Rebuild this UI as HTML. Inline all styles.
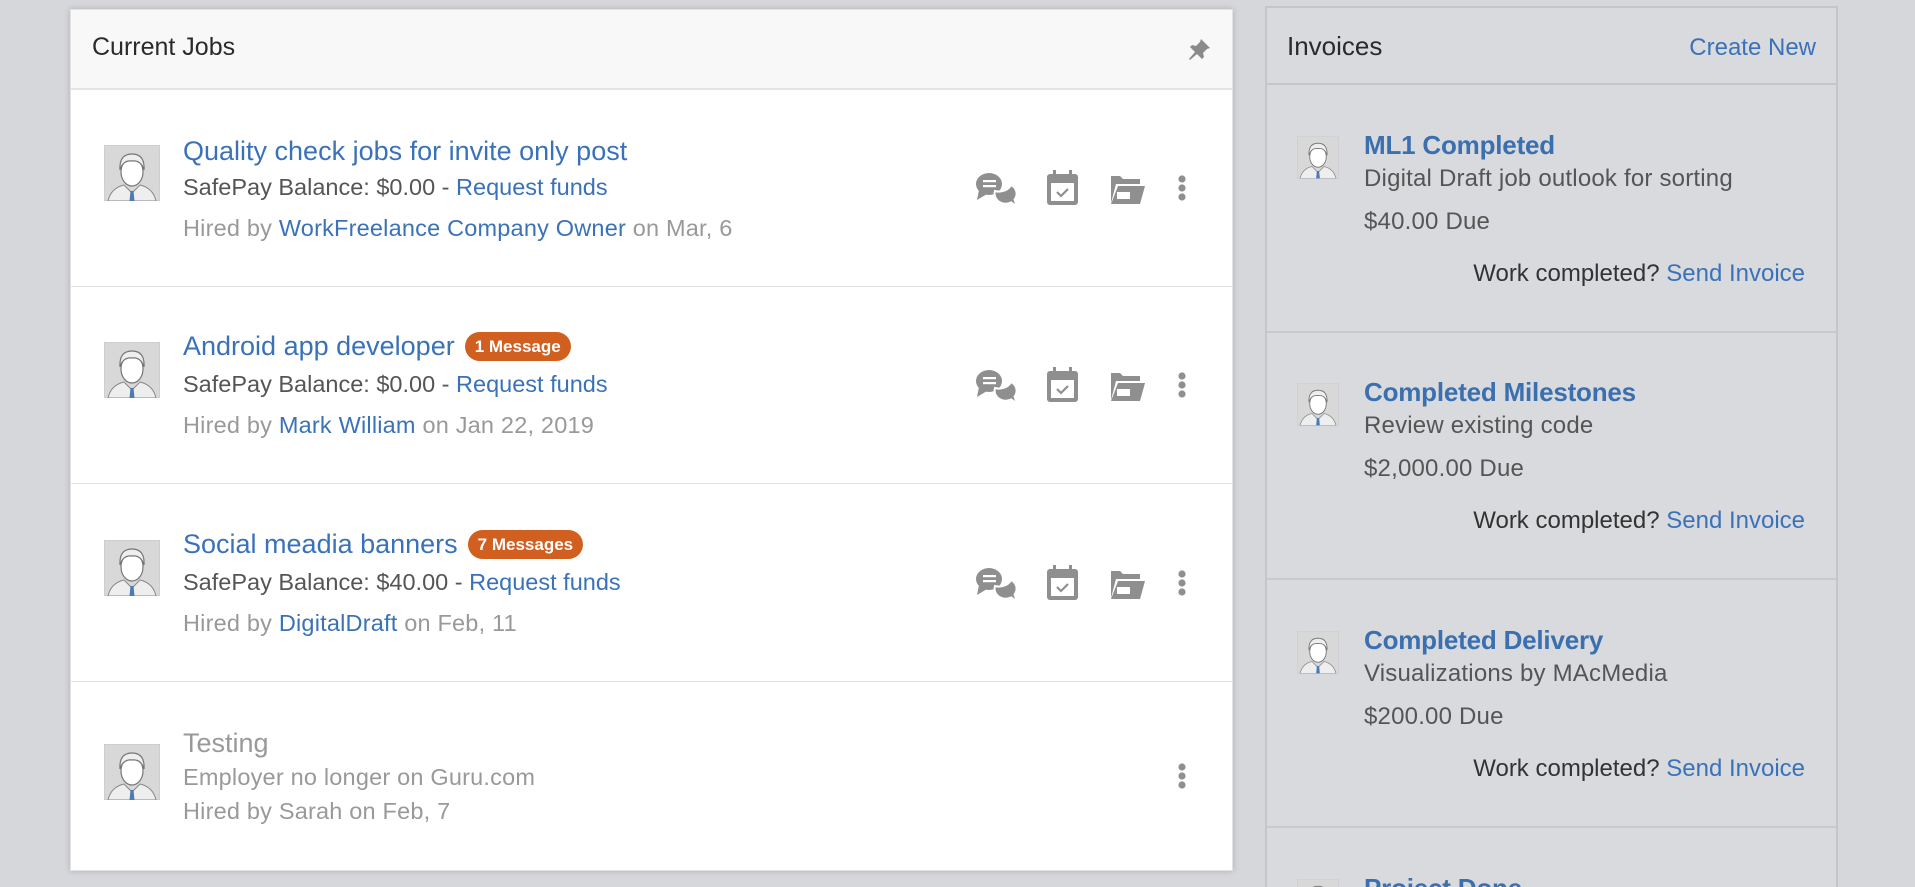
<!DOCTYPE html>
<html><head><meta charset="utf-8"><style>
*{box-sizing:border-box;margin:0;padding:0}
html,body{width:1915px;height:887px;overflow:hidden}
body{background:#d6d7db;font-family:"Liberation Sans",sans-serif;position:relative}
.card{position:absolute;left:70px;top:9px;width:1163px;height:862px;background:#fff;box-shadow:0 0 6px rgba(0,0,0,.18);border:1px solid #e2e2e2}
.hdr{position:absolute;left:0;top:0;width:100%;height:80px;background:#f8f8f8;border-bottom:2px solid #e4e4e4}
.hdr .t{position:absolute;left:21px;top:23px;font-size:25px;color:#2a2a2a}
.row{position:absolute;left:0;width:100%;height:198px;border-bottom:1px solid #e3e3e3}
.av{position:absolute;width:56px;height:56px}
.l{position:absolute;left:112px;white-space:nowrap;line-height:30px}
.ti{font-size:27px;color:#3a72b9}
.ti.g{color:#999}
.s{font-size:23.5px;color:#555}
.h{font-size:23.5px;color:#999;letter-spacing:.2px}
a{color:#3a72b9;text-decoration:none}
.badge{display:inline-block;background:#d15f1f;color:#fff;font-size:17px;font-weight:bold;border-radius:15px;padding:0 10px;line-height:29px;vertical-align:3px;margin-left:10px}
.ic{position:absolute;top:79px}
.side{position:absolute;left:1265px;top:6px;width:573px;height:881px;background:#d9dadd;border:2px solid #c5c6ca;border-bottom:none;overflow:hidden}
.side .hd{position:absolute;left:0;top:0;width:100%;height:77px;border-bottom:2px solid #c5c6ca}
.inv{position:absolute;left:0;width:100%;height:248px;border-bottom:2px solid #c8c9cd}
.inv .av{width:42px;height:43px;left:30px;top:51px}
.il{position:absolute;left:97px;white-space:nowrap;line-height:30px}
.it{font-size:26px;color:#3a6fb0;font-weight:bold;letter-spacing:-.2px}
.id{font-size:24px;color:#555;letter-spacing:.2px}
.iw{position:absolute;right:31px;font-size:24px;color:#333;line-height:30px}
</style></head><body>
<svg width="0" height="0" style="position:absolute">
<defs>
<symbol id="avt" viewBox="0 0 56 56">
<rect width="56" height="56" fill="#d8d8d8" stroke="#c4c4c4"/>
<path d="M4 56 Q7 43 20 40 L28 48 L36 40 Q49 43 52 56Z" fill="#eee" stroke="#888" stroke-width="1"/>
<path d="M26.5 46 L29.5 46 L30.5 56 L25.5 56Z" fill="#4a7bb5"/>
<ellipse cx="28" cy="27" rx="11" ry="14" fill="#fff" stroke="#777" stroke-width="1.2"/>
<path d="M16 25 Q15 9 28 9 Q41 9 40 25 Q37 15 28 16 Q19 15 16 25Z" fill="#eee" stroke="#777" stroke-width="1.2"/>
</symbol>
<symbol id="icons" viewBox="0 0 230 40">
<g fill="#8f8f8f">
<ellipse cx="14" cy="16" rx="13" ry="11"/><path d="M4 22 L2 32 L12 26Z"/>
<path d="M20 23 a11 10 0 1 0 16 -6 a13 11 0 0 1 -16 6z" stroke="#fff" stroke-width="2"/><path d="M32 30 L40 36 L37 27Z"/>
<rect x="8" y="12" width="13" height="2.2" fill="#fff"/><rect x="8" y="17" width="13" height="2.2" fill="#fff"/>
<rect x="72" y="6" width="31" height="31" rx="3"/>
<rect x="78" y="2" width="3" height="7"/><rect x="94" y="2" width="3" height="7"/>
<rect x="76" y="15" width="23" height="18" fill="#fff"/>
<path d="M82 24 l4 4 l7 -7" stroke="#8f8f8f" stroke-width="2.2" fill="none"/>
<path d="M136 8 h9 l3 3 h17 v5 h-24 l-5 19 z"/>
<path d="M143 18 h27 l-5 18 h-29z"/>
<rect x="142" y="24" width="13" height="7" fill="#fff"/>
<circle cx="207" cy="11" r="3.6"/><circle cx="207" cy="20" r="3.6"/><circle cx="207" cy="29" r="3.6"/>
</g>
</symbol>
</defs></svg>

<div class="card">
<div class="hdr"><div class="t">Current Jobs</div>
<svg style="position:absolute;left:1116px;top:27px" width="25" height="25" viewBox="0 0 25 25"><path d="M14 2 l9 9 -3 1 -4 4 1 4 -2 2 -5 -5 -7 6 -1 -1 6 -7 -5 -5 2 -2 4 1 4 -4z" fill="#8a8a8a"/></svg>
</div>

<div class="row" style="top:79px">
<svg class="av" style="left:33px;top:56px" viewBox="0 0 56 56"><use href="#avt" width="56" height="56"/></svg>
<div class="l ti" style="top:47px">Quality check jobs for invite only post</div>
<div class="l s" style="top:83px">SafePay Balance: $0.00 - <a>Request funds</a></div>
<div class="l h" style="top:124px">Hired by <a>WorkFreelance Company Owner</a> on Mar, 6</div>
<svg class="ic" style="left:904px" width="230" height="40" viewBox="0 0 230 40"><use href="#icons"/></svg>
</div>

<div class="row" style="top:276px">
<svg class="av" style="left:33px;top:56px" viewBox="0 0 56 56"><use href="#avt" width="56" height="56"/></svg>
<div class="l ti" style="top:45px">Android app developer<span class="badge">1 Message</span></div>
<div class="l s" style="top:83px">SafePay Balance: $0.00 - <a>Request funds</a></div>
<div class="l h" style="top:124px">Hired by <a>Mark William</a> on Jan 22, 2019</div>
<svg class="ic" style="left:904px" width="230" height="40" viewBox="0 0 230 40"><use href="#icons"/></svg>
</div>

<div class="row" style="top:474px">
<svg class="av" style="left:33px;top:56px" viewBox="0 0 56 56"><use href="#avt" width="56" height="56"/></svg>
<div class="l ti" style="top:45px">Social meadia banners<span class="badge">7 Messages</span></div>
<div class="l s" style="top:83px">SafePay Balance: $40.00 - <a>Request funds</a></div>
<div class="l h" style="top:124px">Hired by <a>DigitalDraft</a> on Feb, 11</div>
<svg class="ic" style="left:904px" width="230" height="40" viewBox="0 0 230 40"><use href="#icons"/></svg>
</div>

<div class="row" style="top:672px;border-bottom:none">
<svg class="av" style="left:33px;top:62px" viewBox="0 0 56 56"><use href="#avt" width="56" height="56"/></svg>
<div class="l ti g" style="top:46px">Testing</div>
<div class="l h" style="top:80px">Employer no longer on Guru.com</div>
<div class="l h" style="top:114px">Hired by Sarah on Feb, 7</div>
<svg style="position:absolute;left:1106px;top:81px" width="10" height="30" viewBox="0 0 10 30"><g fill="#8f8f8f"><circle cx="5" cy="4" r="3.6"/><circle cx="5" cy="13" r="3.6"/><circle cx="5" cy="22" r="3.6"/></g></svg>
</div>
</div>

<div class="side">
<div class="hd">
<div style="position:absolute;left:20px;top:23px;font-size:26px;color:#2a2a2a">Invoices</div>
<div style="position:absolute;right:20px;top:26px;font-size:24px;color:#3a72b9">Create New</div>
</div>

<div class="inv" style="top:77px">
<svg class="av" viewBox="0 0 56 56"><use href="#avt" width="56" height="56"/></svg>
<div class="il it" style="top:45px">ML1 Completed</div>
<div class="il id" style="top:79px">Digital Draft job outlook for sorting</div>
<div class="il id" style="top:122px">$40.00 Due</div>
<div class="iw" style="top:174px">Work completed? <a>Send Invoice</a></div>
</div>
<div class="inv" style="top:324px">
<svg class="av" viewBox="0 0 56 56"><use href="#avt" width="56" height="56"/></svg>
<div class="il it" style="top:45px">Completed Milestones</div>
<div class="il id" style="top:79px">Review existing code</div>
<div class="il id" style="top:122px">$2,000.00 Due</div>
<div class="iw" style="top:174px">Work completed? <a>Send Invoice</a></div>
</div>
<div class="inv" style="top:572px">
<svg class="av" viewBox="0 0 56 56"><use href="#avt" width="56" height="56"/></svg>
<div class="il it" style="top:45px">Completed Delivery</div>
<div class="il id" style="top:79px">Visualizations by MAcMedia</div>
<div class="il id" style="top:122px">$200.00 Due</div>
<div class="iw" style="top:174px">Work completed? <a>Send Invoice</a></div>
</div>
<div class="inv" style="top:820px;height:61px;border-bottom:none;overflow:hidden">
<svg class="av" viewBox="0 0 56 56"><use href="#avt" width="56" height="56"/></svg>
<div class="il it" style="top:45px">Project Done</div>
</div>
</div>
</body></html>
